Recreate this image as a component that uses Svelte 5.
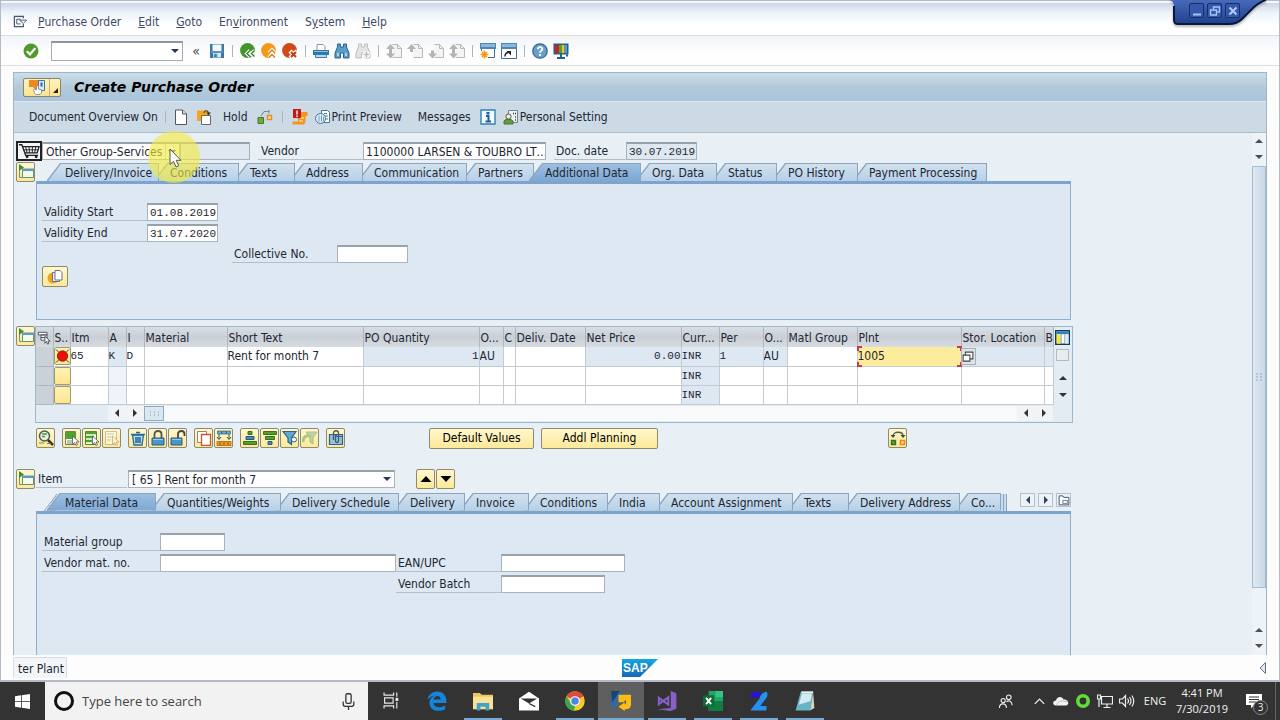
<script>
  let vendor = $state('1100000 LARSEN & TOUBRO LT…');
  let docDate = $state('30.07.2019');
  let command = $state('');
  let headerTab = $state('Additional Data');
  let itemTab = $state('Material Data');

  const menus = [
    ['P', 'urchase Order', ''],
    ['E', 'dit', ''],
    ['G', 'oto', ''],
    ['v', 'ironment', 'En'],
    ['y', 'stem', 'S'],
    ['H', 'elp', '']
  ];

  const headerTabs = [
    ['Delivery/Invoice', 112],
    ['Conditions', 85],
    ['Texts', 61],
    ['Address', 73],
    ['Communication', 109],
    ['Partners', 72],
    ['Additional Data', 112],
    ['Org. Data', 81],
    ['Status', 65],
    ['PO History', 86],
    ['Payment Processing', 134]
  ];

  const itemTabs = [
    ['Material Data', 109],
    ['Quantities/Weights', 130],
    ['Delivery Schedule', 123],
    ['Delivery', 71],
    ['Invoice', 69],
    ['Conditions', 84],
    ['India', 57],
    ['Account Assignment', 138],
    ['Texts', 61],
    ['Delivery Address', 116],
    ['Co...', 46]
  ];

  const systemTools = [
    [['save', 'Save']],
    [['back', 'Back'], ['exit', 'Exit'], ['cancel', 'Cancel']],
    [['print', 'Print'], ['find', 'Find'], ['findNext', 'Find next']],
    [['pageFirst', 'First page'], ['pageUp', 'Previous page'], ['pageDown', 'Next page'], ['pageLast', 'Last page']],
    [['newSession', 'New session'], ['shortcut', 'Create shortcut']],
    [['help', 'Help'], ['layout', 'Customize layout']]
  ];

  const itemTools = [
    [['detail', 'Details']],
    [['selectAll', 'Select all'], ['selectBlock', 'Select block'], ['deselect', 'Deselect all']],
    [['trash', 'Delete'], ['lock', 'Lock'], ['unlock', 'Unlock']],
    [['copy', 'Copy'], ['move', 'Fast change']],
    [['sortUp', 'Sort ascending'], ['sortDown', 'Sort descending'], ['filter', 'Filter'], ['filterOff', 'Reset filter']],
    [['attach', 'Additional planning']]
  ];

  // w: column width, mono: fixed-pitch value, ro: display-only once the row is filled
  const columns = [
    { key: 'itm', label: 'Itm', w: 38, mono: true },
    { key: 'acct', label: 'A', w: 18, mono: true, ro: true, tint: true },
    { key: 'cat', label: 'I', w: 18, mono: true },
    { key: 'material', label: 'Material', w: 83 },
    { key: 'text', label: 'Short Text', w: 136 },
    { key: 'qty', label: 'PO Quantity', w: 116, mono: true, ro: true, right: true },
    { key: 'unit', label: 'O...', w: 24, ro: true },
    { key: 'dc', label: 'C', w: 12 },
    { key: 'date', label: 'Deliv. Date', w: 70 },
    { key: 'price', label: 'Net Price', w: 96, mono: true, ro: true, right: true },
    { key: 'curr', label: 'Curr...', w: 38, mono: true, ro: true, always: true },
    { key: 'per', label: 'Per', w: 44, mono: true, ro: true },
    { key: 'opu', label: 'O...', w: 24, ro: true },
    { key: 'group', label: 'Matl Group', w: 70 },
    { key: 'plant', label: 'Plnt', w: 104 },
    { key: 'sloc', label: 'Stor. Location', w: 83, ro: true },
    { key: 'batch', label: 'B', w: 9, ro: true }
  ];

  let rows = $state([
    { itm: '65', acct: 'K', cat: 'D', text: 'Rent for month 7', qty: '1', unit: 'AU', price: '0.00', curr: 'INR', per: '1', opu: 'AU', plant: '1005' },
    { curr: 'INR' },
    { curr: 'INR' }
  ]);

  const taskApps = [
    { icon: 'taskView', label: 'Task View' },
    { icon: 'edge', label: 'Edge' },
    { icon: 'explorer', label: 'File Explorer', open: true },
    { icon: 'mail', label: 'Mail' },
    { icon: 'chrome', label: 'Chrome', open: true },
    { icon: 'sapgui', label: 'SAP Logon', open: true, active: true },
    { icon: 'vs', label: 'Visual Studio', open: true },
    { icon: 'excel', label: 'Excel', open: true },
    { icon: 'zoomit', label: 'Z', open: true },
    { icon: 'notepad', label: 'Notepad', open: true }
  ];

  const page = '<path d="M6.5 1.500h5l4 4v9h-9" fill="#f4f4f4" stroke="#b9b9b9"/><path d="M11.500 1.500v4h4" fill="none" stroke="#b9b9b9"/>';
  const up = '<path d="M4.500 1 9 6H6v3H3V6H0z" fill="#b4b4b4"/>';
  const down = '<path d="M4.500 15.500 9 10.500H6v-3H3v3H0z" fill="#b4b4b4"/>';
  const glasses = '<path d="M3.500 1h3v3h3V1h3v3l2.500 6v5h-5.500v-5h-3v5H1v-5l2.500-6z"';
  const hand = '<path d="M8.500 6v8.500l2-2 1.500 3 1.500-.8-1.500-2.700H15z" fill="#fff" stroke="#555" stroke-width=".8"/>';

  const icons = {
    menu: '<path d="M11 3.500V1.500H1.500v11H11v-3" fill="none" stroke="#46566f" stroke-width="1.300"/><path d="M4 4.500h4M4 9.500h4M4 4.500v5M7 5.500h7.500L11 9z" fill="#fff" stroke="#46566f"/>',
    ok: '<circle cx="8" cy="8" r="7.500" fill="#4f9a2c"/><path d="M3.800 8.200 7 11.300l5.300-6.200" fill="none" stroke="#fff" stroke-width="2.200"/>',
    save: '<path d="M1 1h14v14H1z" fill="#3a78a8"/><path d="M3.500 1.500h9V8h-9z" fill="#f3f8fc"/><path d="M4 10h8v4.500H4z" fill="#d9e9f4"/><path d="M5 11h3v3.500H5zM2 9h12" fill="#3a78a8" stroke="#79add0"/>',
    back: '<circle cx="7.500" cy="7.500" r="7.400" fill="#43942d"/><path d="M10 7.500 7 10.500l3 3M14.500 7.500l-3 3 3 3" fill="none" stroke="#fff" stroke-width="3.600"/><path d="M10 7.500 7 10.500l3 3M14.500 7.500l-3 3 3 3" fill="none" stroke="#347d26" stroke-width="1.400"/>',
    exit: '<circle cx="7.500" cy="7.500" r="7.400" fill="#f39a1b"/><path d="M8 10 11 7l3 3M8 14.500l3-3 3 3" fill="none" stroke="#fff" stroke-width="3.600"/><path d="M8 10 11 7l3 3M8 14.500l3-3 3 3" fill="none" stroke="#d8780c" stroke-width="1.400"/>',
    cancel: '<circle cx="7.500" cy="7.500" r="7.400" fill="#cf4a16"/><path d="m8 8 7 7m0-7-7 7" stroke="#fff" stroke-width="4.200"/><path d="m9 9 5 5m0-5-5 5" stroke="#c23a10" stroke-width="2"/>',
    print: '<path d="M4 7V1.500h6l2 2V7" fill="#fff" stroke="#8a98a6"/><path d="M0 7h16v5H0z" fill="#2f75a8"/><path d="M1 8h14v1H1z" fill="#8fc0df"/><path d="M2.500 11.500h11v3h-11z" fill="#b6dcf0" stroke="#3a7eae"/>',
    find: glasses + ' fill="#5b9cc8" stroke="#2b6490"/><path d="M3 10h2v3H3zM11 10h2v3h-2z" fill="#a9d0e8"/>',
    findNext: glasses + ' fill="#e4e4e4" stroke="#bdbdbd"/><path d="M11.500 8v7M8 11.500h7" stroke="#fff" stroke-width="4"/><path d="M11.500 8.500v6M8.500 11.500h6" stroke="#bbb" stroke-width="1.600"/>',
    pageFirst: page + up + down,
    pageUp: page + up,
    pageDown: page + down,
    pageLast: page + up + down,
    newSession: '<path d="M1.500 1.500h13v13h-13z" fill="#fff" stroke="#3b6d98"/><path d="M0 0h16v6H0z" fill="#4b86b4"/><path d="M1 1h14v3H1z" fill="#8ab8da"/><circle cx="4.500" cy="11.500" r="4.500" fill="#fff"/><path d="M4.500 7.500v8M.5 11.500h8M2 9l5 5m0-5-5 5" stroke="#f29b12" stroke-width="1.600"/>',
    shortcut: '<path d="M.5.500h15v15H.5z" fill="#fff" stroke="#3b6d98"/><path d="M0 0h16v6H0z" fill="#4b86b4"/><path d="M1 1h14v3H1z" fill="#8ab8da"/><path d="M4 13.500c0-3 1-4 3.500-4" fill="none" stroke="#222" stroke-width="1.500"/><path d="M5.500 8h4.500v4.500z" fill="#222"/>',
    help: '<circle cx="8" cy="8" r="7.200" fill="#6a9fca" stroke="#33678f" stroke-width="1.300"/><path d="M5.800 6.200C6 3.300 10.600 3.500 10.300 6.300 10.100 7.800 8 7.800 8 9.800M8 11v2" fill="none" stroke="#fff" stroke-width="1.800"/>',
    layout: '<path d="M.5.500h15v11H.5z" fill="#25608c"/><path d="M2 2h4.500v8H2z" fill="#cf1f1f"/><path d="M6 2h3v8H6z" fill="#4da332"/><path d="M9 2h2.500v8H9z" fill="#f2c21b"/><path d="M11.500 2H14v8h-2.500z" fill="#4c9bd0"/><path d="M8 11v3.500M4 15h8M13 12.500h2" stroke="#25608c" stroke-width="2"/>',
    services: '<path d="M0 1h10v7H8l-1 3-3-3H0z" fill="#ee8a1d"/><path d="M9.500 1.500h6v10h-6z" fill="#dceaf6" stroke="#3c75a8"/><path d="M11.500 3.500h2v4h-2z" fill="#2c62a0"/><path d="M6 14.500 4.500 11l1-1 2 1V6.500h2V10l3 .8V14l-1.500 1.500H7z" fill="#fff" stroke="#73818e" stroke-width=".8"/>',
    create: '<path d="M2.500 1h7l4 4v10.500h-11z" fill="#fff" stroke="#555"/><path d="M9.500 1v4h4" fill="#ddd" stroke="#555"/>',
    other: '<path d="M1 1.500h11V12H1z" fill="#f7a51c"/><path d="M5.500 6.500h9v9h-9z" fill="#fff" stroke="#667"/><path d="M8 4c0-3 4-3 4.500 0" fill="none" stroke="#444" stroke-width="1.200"/><path d="M10.500 3.500h4.500L12.500 6.500z" fill="#333"/>',
    check: '<path d="M1 8.500h5.500v6H1z" fill="#70a83c" stroke="#47762b"/><path d="M10.500 6.500h4v4h-4z" fill="#ffe8bc" stroke="#e98b1d" stroke-width="1.500"/><path d="M4 7 7 2.500h5M12 1v3.500" fill="none" stroke="#768390"/>',
    messages: '<path d="M6 3h9.500v4h-2v5c0 3-2 3.500-3 3.500H.5v-3h5.500z" fill="#f3941e"/><path d="M7 12h4M8 9h4" stroke="#ffd28a" stroke-width="1.500"/><path d="M1 0h8v9H1z" fill="#c31818"/><path d="M5 1.500v4M5 6.500V8" stroke="#fff" stroke-width="1.500"/>',
    preview: '<path d="M6.500 1.500h6l2 2v10h-8z" fill="#fff" stroke="#48759b"/><path d="M9 4.500h3M10 7h3M10 10h3" stroke="#48759b"/><circle cx="5.500" cy="9.500" r="5" fill="#dcecf6" stroke="#48759b"/><path d="M4 6.500v6M6.500 6.500v6M8.500 8v4" stroke="#6e9dbf"/>',
    info: '<path d="M1 1h14v14H1z" fill="#f6fbff" stroke="#2b84b9" stroke-width="1.400"/><path d="M6 7h2.500v5M5.500 12.500H11" fill="none" stroke="#17649b" stroke-width="2"/><path d="M6.500 3h3v2.500h-3z" fill="#17649b"/>',
    person: '<path d="M5.500 1.500h9v12h-9z" fill="#eef2f5" stroke="#76828d"/><path d="M10 4.500h1M12 4.500h1M12 8h1M12 11h1" stroke="#333" stroke-width="1.400"/><circle cx="5.500" cy="7.500" r="2.600" fill="#f0e9d6" stroke="#555"/><path d="M1 15v-3l2-1.500h5l2 1.500v3z" fill="#66993e" stroke="#4b7730"/>',
    expand: '<path d="M4.500 5.500h11v8h-11z" fill="#f5f9ea" stroke="#61907c"/><path d="M4 4.500h12v2.500H4z" fill="#5e9ac4"/><path d="M1.500 5v8.500h3" fill="none" stroke="#7e8d6a"/><path d="M1 0 6 3.500 1 7z" fill="#3d8e37"/>',
    texts: '<circle cx="6" cy="9" r="5.500" fill="#f0a41f"/><path d="M5.500 3.500h5l2 2v7h-7z" fill="#eef5fa" stroke="#68747f"/><path d="M8 1.500h5l2 2v7.500H8z" fill="#fff" stroke="#68747f"/>',
    config: '<path d="M1.500 1.500h10v3h-10zM4.500 4.500h7v3h-7zM4.500 7.500h7v3h-7z" fill="#fff" stroke="#404a55"/><path d="m9 6 6 5.500h-2.500l1 3-1.500.5-1-3L9 14z" fill="#fff" stroke="#404a55"/>',
    columns: '<path d="M.8.800h14.400v14.400H.8z" fill="#fff" stroke="#123b57" stroke-width="1.600"/><path d="M1.500 1.500h13v3h-13z" fill="#2887b9"/><path d="M2 5h4v9.500H2z" fill="#ffe42e"/><path d="M6.500 4.500v10M10.500 4.500v10" stroke="#6f9ab3"/><path d="M11 5h3.500v9.500H11z" fill="#d6ebf5"/>',
    detail: '<circle cx="6.500" cy="6" r="5" fill="#e5f0dc" stroke="#4b5c55" stroke-width="1.500"/><path d="M4 4h5M4 6.500h3" stroke="#529841" stroke-width="1.500"/><path d="m10 10 5 5" stroke="#333" stroke-width="2.500"/><path d="M9 13.500h4M1 13h5" stroke="#6d8a50"/>',
    selectAll: '<path d="M1.500 1.500h10v13h-10z" fill="#fff" stroke="#6f8362"/><path d="M2 2h9v7H2z" fill="#4fa22c"/><path d="M3 11h5M3 13h5" stroke="#7b8a74"/>' + hand,
    selectBlock: '<path d="M1.500 1.500h11v13h-11z" fill="#fff" stroke="#4f8a36"/><path d="M2 3h10M2 7h8M2 11h6" stroke="#4fa22c" stroke-width="2.500"/>' + hand,
    deselect: '<g opacity=".4"><path d="M1.500 1.500h11v13h-11z" fill="#fff" stroke="#777"/><path d="M3 4h7M3 7h5M3 10h4" stroke="#888"/>' + hand + '</g>',
    trash: '<path d="M2.500 5h11l-1.500 10H4z" fill="#b9dcef" stroke="#2b6a96" stroke-width="1.300"/><path d="M1 4.500h14M6 2.500h4M6 7v6M8 7v6M10 7v6" stroke="#2b6a96" stroke-width="1.600"/>',
    lock: '<path d="M4.500 8V4c0-4 7-4 7 0v4" fill="none" stroke="#555" stroke-width="1.800"/><path d="M2 8h12v7H2z" fill="#4f94c3" stroke="#245f8b"/><path d="M3 9.500h10" stroke="#9accea"/>',
    unlock: '<path d="M8 8V4c0-4 6.500-4 6.500 0v2" fill="none" stroke="#444" stroke-width="1.800"/><path d="M1 8h11v7H1z" fill="#4f94c3" stroke="#245f8b"/><path d="M2 9.500h9" stroke="#9accea"/>',
    copy: '<path d="M1.500 1.500h9v11h-9z" fill="#fff" stroke="#a47d78"/><path d="M5.500 4.500h9v11h-9z" fill="#fff" stroke="#c9542d" stroke-width="1.300"/>',
    move: '<path d="M1.500 1h4v3h-4zM6 1h4v3H6zM10.500 1h4v3h-4z" fill="#6dafd5" stroke="#28597b" stroke-width=".7"/><path d="M3 4v5M13 4v5M1 7l2 2.500L5 7M11 7l2 2.500L15 7" fill="none" stroke="#28597b"/><path d="M1 11.500h14v4H1z" fill="#f19a23" stroke="#9c5a13" stroke-width=".7"/><path d="M4 12v3M8 12v3M12 12v3" stroke="#9c5a13"/>',
    sortUp: '<path d="M6 1.500h4v3H6z" fill="#4fa22c" stroke="#39711f"/><path d="M4 6.500h8v3H4z" fill="#4a8cba" stroke="#28597b"/><path d="M1.500 11.500h13v3h-13z" fill="#4fa22c" stroke="#39711f"/>',
    sortDown: '<path d="M1.500 1.500h13v3h-13z" fill="#4fa22c" stroke="#39711f"/><path d="M3.500 6.500h9v3h-9z" fill="#4fa22c" stroke="#39711f"/><path d="M6 11.500h4v3H6z" fill="#4a8cba" stroke="#28597b"/>',
    filter: '<path d="M1 1.500h13L9.500 8v6.500L6 12V8z" fill="#64a8d2" stroke="#2b6490" stroke-width="1.200"/><circle cx="12" cy="9.500" r="2.500" fill="#fff" stroke="#2b6490"/>',
    filterOff: '<g opacity=".5"><path d="M4 2h11l-4 6v6l-3-2V8z" fill="#8bb78a" stroke="#5c8a68"/><path d="M1 12c0-5 3-7 8-6" fill="none" stroke="#5ca34a" stroke-width="3"/></g>',
    attach: '<path d="M1.500 4.500h13v10h-13z" fill="#8fc2e0" stroke="#2b6490" stroke-width="1.200"/><path d="M8.500 4.500v2h6" fill="none" stroke="#2b6490"/><path d="M5.500 10V3c0-3 5-3 5 0v8c0 2-3 2-3 0V5" fill="none" stroke="#4d5560" stroke-width="1.300"/>',
    swap: '<path d="M3 6c0-5 10-5 10 0" fill="none" stroke="#4e5c42" stroke-width="1.300"/><path d="M.5 5h5L3 8zM10.500 5h5L13 8z" fill="#444"/><path d="M1.500 10.500h4v4h-4z" fill="#5ba236" stroke="#38711f" stroke-width="1.400"/><path d="M10.500 10.500h4v4h-4z" fill="#ffe0a8" stroke="#ee8818" stroke-width="1.600"/>',
    stack: '<path d="M4.500 1.500h10v9h-10z" fill="#fff" stroke="#444" stroke-width="1.400"/><path d="M1.500 5.500h9v8h-9z" fill="#fff" stroke="#444" stroke-width="1.400"/>',
    tabList: '<path d="M1.500 2.500h5l1 2h7v10h-13z" fill="#fff" stroke="#40566e" stroke-width="1.300"/><path d="M6.500 8.500h6v4h-6z" fill="#fff" stroke="#40566e"/>',
    windows: '<path d="M0 2.300 6.500 1.400v6.200H0zM7.300 1.300 16 0v7.600H7.300zM0 8.400h6.500v6.200L0 13.700zM7.300 8.400H16V16l-8.700-1.300z" fill="#fff"/>',
    mic: '<rect x="5.500" y=".7" width="5" height="9" rx="1.500" fill="none" stroke="#333" stroke-width="1.200"/><path d="M3 8v2.500c0 1 1 2 2 2h6c1 0 2-1 2-2V8M8 12.500V16" fill="none" stroke="#333" stroke-width="1.200"/>',
    taskView: '<path d="M1 .5v2.500h9V.5M1 15.500V13h9v2.500M1.500 5.500h8v5h-8zM13 .5v4M13 9.500v6" fill="none" stroke="#e8e8e8" stroke-width="1.100"/><path d="M11.800 5.500h2.600v3h-2.600z" fill="#e8e8e8"/>',
    edge: '<path d="M.5 7.200C1.500-2 15.500-2 15.500 8v1.500H5.200c.5 4 5.500 4.300 9.300 2v3c-5.500 3-12.500 1-12.500-5C2 6.500 4 4.600 6 3.800 3.500 4 1.500 5.500.5 7.200zM5.300 6.800h5.600c0-4-5.200-3.600-5.600 0z" fill="#1585dc"/>',
    explorer: '<path d="M0 1.500h5.500L7 3h9v11.500H0z" fill="#eec45c"/><path d="M0 4.500h16v10H0z" fill="#fbe195"/><path d="M3 15.500v-6h10v6h-3v-3H6v3z" fill="#3fa3cc"/>',
    mail: '<path d="M0 6 8 .5 16 6v9.500H0z" fill="#fff"/><path d="M1.500 6h13L8 10z" fill="#333"/><path d="m8 10 5 2.500" stroke="#333"/>',
    chrome: '<circle cx="8" cy="8" r="7.800" fill="#f7c928"/><path d="M8 8 1.250 4.100A7.800 7.800 0 0 1 14.750 4.100z" fill="#dd4b3b"/><path d="M1.250 4.100 4.700 10 8 11.500l-.9 4.250A7.800 7.800 0 0 1 1.250 4.100z" fill="#3ba457"/><circle cx="8" cy="8" r="3.900" fill="#fff"/><circle cx="8" cy="8" r="3" fill="#4a86e8"/>',
    sapgui: '<path d="M0 0h9v9H4v4H0z" fill="#2f6aa5"/><path d="M0 0h7L1 9z" fill="#19466f"/><path d="M6 3h10v7.500c0 3-2 4-5 4v1.500L6 12.500 11 9v1.500c1 0 1-.5 1-1V7l-2 2H6z" fill="#f9bd15"/>',
    vs: '<path d="m11 0 4.500 1.800v12.400L11 16 .5 14.500 11 13.500z" fill="#8661c5"/><path d="M1.500 5.500 9 10.800V5L1.500 10.500z" fill="none" stroke="#8661c5" stroke-width="1.700"/>',
    excel: '<path d="M4.500 0H16v16H4.500z" fill="#21a366"/><path d="M10 0h6v5h-6z" fill="#33c481"/><path d="M4.500 8H16v8H4.500z" fill="#107c41"/><path d="M0 3.500h9v9H0z" fill="#0d6b38"/><path d="m2.500 5.500 4 5m0-5-4 5" stroke="#fff" stroke-width="1.500"/>',
    zoomit: '<path d="M2 1h8L8 5H1z" fill="#2514e0"/><path d="M14 .5c2 2 0 6-2 7.500l-3 4h5v3.500H1L8.500 6C9 3 11 1 14 .5z" fill="#2791ef"/>',
    notepad: '<path d="M4.500 1h10L12 15.500H.5z" fill="#69b4c6"/><path d="M5.500 2h8l-1 6L3 11z" fill="#cfecef"/><path d="m14.500 1 1 12.500-3.500 2z" fill="#d7d3c4"/><path d="M5 1h9.500" stroke="#eee" stroke-width="1.500"/>',
    people: '<circle cx="5.500" cy="7" r="2.200" fill="none" stroke="#eee" stroke-width="1.200"/><path d="M1.500 15c0-6 7.500-6 7.500 0" fill="none" stroke="#eee" stroke-width="1.200"/><circle cx="11.500" cy="3.500" r="2.500" fill="none" stroke="#eee" stroke-width="1.200"/><path d="M9 8.500c2.500-2.500 6-.5 6 3.500" fill="none" stroke="#eee" stroke-width="1.200"/>',
    chevron: '<path d="m3 10.500 5-5 5 5" fill="none" stroke="#eee" stroke-width="1.400"/>',
    cloud: '<path d="M3 12.500c-4 0-3.500-5 0-5C4 3 9.500 3 10.500 6.500c5-1 7 6 1.500 6z" fill="#f2f2f2"/><path d="M3 12.500C6 7 9 7.500 14 9" fill="none" stroke="#bbb"/>',
    green: '<circle cx="8" cy="8" r="5.200" fill="none" stroke="#62db3b" stroke-width="3.600"/>',
    network: '<path d="M4.500 3.500h11v7.500h-11zM10 11v3.500M6.500 14.500h7M.5 2h3v4h-3zM2 6v8" fill="none" stroke="#eee" stroke-width="1.200"/>',
    speaker: '<path d="M.5 6h3l3-3.500v11L3.500 10h-3z" fill="none" stroke="#eee" stroke-width="1.200"/><path d="M8.500 5.500q2 2.500 0 5M10.500 4q3 4 0 8M12.800 2.500q4 5.500 0 11" fill="none" stroke="#eee" stroke-width="1.200"/>',
    note: '<path d="M0 1h16v11H8l-3 3.500V12H0z" fill="#fff"/><path d="M3 4h10M3 6.500h10M3 9h7" stroke="#333" stroke-width="1.200"/>',
    cart: '<path d="M1 1.500h3l4 11h13M4.500 3.500H22l-2 6.500H7" fill="none" stroke="#222" stroke-width="1.400"/><path d="M8 3.500l1.500 6.500M11.500 3.500 12 10M15 3.500V10M18.500 3.500 17.500 10M5.500 6.800H21" stroke="#222"/><circle cx="9.500" cy="14" r="1.500" fill="#222"/><circle cx="19" cy="14" r="1.500" fill="#222"/>'
  };
</script>

{#snippet icon(name, size = 16)}
  <svg class="icon" width={size} height={size} viewBox="0 0 16 16" aria-hidden="true">{@html icons[name]}</svg>
{/snippet}

{#snippet arrow(dir)}
  <svg class="icon" width="8" height="8" viewBox="0 0 8 8" aria-hidden="true">
    <path
      d={dir === 'up' ? 'M4 2 8 6H0z' : dir === 'down' ? 'M0 2h8L4 6z' : dir === 'left' ? 'M6 0v8L2 4z' : 'M2 0v8l4-4z'}
      fill="currentColor"
    />
  </svg>
{/snippet}

{#snippet tabStrip(tabs, current, select, stacked = false)}
  <div class="tabs" class:stacked role="tablist">
    {#each tabs as [tab, width], i}
      <button
        class="tab"
        class:selected={tab === current}
        role="tab"
        aria-selected={tab === current}
        style:width="{width}px"
        style:z-index={tab === current ? 20 : tabs.length - i}
        onclick={() => select(tab)}
      ><span>{tab}</span></button>
    {/each}
  </div>
{/snippet}

<div class="screen">
  <div class="window">
    <header class="menubar">
      <button class="plain" aria-label="System menu">{@render icon('menu', 15)}</button>
      <nav>
        {#each menus as [key, rest, before]}
          <button class="plain menu">{before}<u>{key}</u>{rest}</button>
        {/each}
      </nav>
      <div class="win-controls">
        <svg class="win-shape" viewBox="0 0 98 26" aria-hidden="true">
          <defs>
            <linearGradient id="win" x2="0" y2="1">
              <stop offset="0" stop-color="#4669b8" />
              <stop offset="1" stop-color="#20408f" />
            </linearGradient>
          </defs>
          <path d="M0 0h98Q90 2 84 8L73 19Q68 24 60 24H9Q5 24 5 20V6Q5 1 0 0z" fill="url(#win)" />
          <path d="M5 6v14q0 4 4 4h51q8 0 13-5L84 8q6-6 13-8" fill="none" stroke="#0c1839" stroke-width="2" />
        </svg>
        <div class="win-buttons">
          <button aria-label="Minimize"><svg viewBox="0 0 12 12"><path d="M2 9.500h8" stroke="#a9c3ff" stroke-width="2" /></svg></button>
          <button aria-label="Restore"><svg viewBox="0 0 12 12"><path d="M4.500 4V2h6v5h-2M1.500 5h6v5h-6z" fill="none" stroke="#a9c3ff" stroke-width="1.400" /></svg></button>
          <button aria-label="Close"><svg viewBox="0 0 12 12"><path d="m2.500 2.500 7 7m0-7-7 7" stroke="#b5ccff" stroke-width="2" /></svg></button>
        </div>
      </div>
    </header>

    <div class="systembar">
      <button class="plain" aria-label="Enter">{@render icon('ok')}</button>
      <div class="command">
        <input aria-label="Command" bind:value={command} />
        <span class="caret">{@render arrow('down')}</span>
      </div>
      <button class="plain collapse" aria-label="Collapse command field">«</button>
      {#each systemTools as group, i}
        {#if i}<span class="sep"></span>{/if}
        {#each group as [name, label]}
          <button class="plain" aria-label={label}>{@render icon(name)}</button>
        {/each}
      {/each}
    </div>

    <div class="frame">
      <div class="titlebar">
        <div class="services">
          <button aria-label="Services for object">{@render icon('services')}</button>
          <button class="more" aria-label="More services"><svg width="5" height="5" viewBox="0 0 5 5"><path d="M5 0v5H0z" fill="#222" /></svg></button>
        </div>
        <h1>Create Purchase Order</h1>
      </div>

      <div class="appbar">
        <button class="plain">Document Overview On</button>
        <span class="sep wide"></span>
        <button class="plain" aria-label="Create">{@render icon('create')}</button>
        <button class="plain" aria-label="Other purchase order">{@render icon('other')}</button>
        <button class="plain hold">Hold</button>
        <button class="plain" aria-label="Check">{@render icon('check')}</button>
        <span class="sep"></span>
        <button class="plain" aria-label="Output messages">{@render icon('messages')}</button>
        <button class="plain">{@render icon('preview')}Print Preview</button>
        <button class="plain messages">Messages</button>
        <button class="plain" aria-label="Information">{@render icon('info')}</button>
        <button class="plain">{@render icon('person')}Personal Setting</button>
      </div>

      <div class="work">
        <main>
          <div class="doc-header">
            <svg class="cart" width="26" height="20" viewBox="0 0 23 16" aria-label="Purchase order">{@html icons.cart}</svg>
            <div class="select doc-type">
              <select aria-label="Order type"><option>Other Group-Services</option></select>
              <span class="caret boxed">{@render arrow('down')}</span>
              <svg class="pointer" viewBox="0 0 60 60" aria-hidden="true">
                <circle cx="30" cy="30" r="26" fill="#f2ea3c" opacity=".62" />
                <path d="M26 22v15.500l3.500-3.200 2.600 5.700 2.600-1.200-2.500-5.500h4.700z" fill="#fff" stroke="#555" />
              </svg>
            </div>
            <input class="field off po-number" aria-label="Purchase order number" readonly />
            <label class="lbl vendor-lbl" for="vendor">Vendor</label>
            <input class="field vendor" id="vendor" bind:value={vendor} />
            <label class="lbl date-lbl" for="doc-date">Doc. date</label>
            <input class="field mono off date" id="doc-date" bind:value={docDate} />
          </div>

          <section class="block header-block">
            <button class="yellow expand" aria-label="Collapse header">{@render icon('expand')}</button>
            <div class="block-body">
              {@render tabStrip(headerTabs, headerTab, (t) => (headerTab = t))}
              <div class="panel header-panel">
                <div class="form-row">
                  <label class="lbl w105" for="valid-from">Validity Start</label>
                  <input class="field mono date" id="valid-from" value="01.08.2019" />
                </div>
                <div class="form-row">
                  <label class="lbl w105" for="valid-to">Validity End</label>
                  <input class="field mono date" id="valid-to" value="31.07.2020" />
                </div>
                <div class="form-row second">
                  <label class="lbl w105" for="collective">Collective No.</label>
                  <input class="field date" id="collective" />
                </div>
                <button class="yellow texts-btn" aria-label="Texts">{@render icon('texts')}</button>
              </div>
            </div>
          </section>

          <section class="block items-block">
            <button class="yellow expand" aria-label="Collapse item overview">{@render icon('expand')}</button>
            <div class="block-body">
              <div class="grid-box">
                <div class="grid-main">
                  <table>
                    <colgroup>
                      <col style:width="17px" />
                      <col style:width="17px" />
                      {#each columns as col}<col style:width="{col.w}px" />{/each}
                    </colgroup>
                    <thead>
                      <tr>
                        <th aria-label="Configure">{@render icon('config', 14)}</th>
                        <th>S..</th>
                        {#each columns as col}<th>{col.label}</th>{/each}
                      </tr>
                    </thead>
                    <tbody>
                      {#each rows as row, r}
                        <tr>
                          <td class="selector"><button aria-label="Select row {r + 1}"></button></td>
                          <td class="status">
                            <button aria-label="Status">
                              {#if row.itm}
                                <svg width="16" height="16" viewBox="0 0 16 16"><path d="M1 1l3 3M15 1l-3 3M1 15l3-3M15 15l-3-3" stroke="#333" /><circle cx="8" cy="8" r="5.500" fill="#f30b0b" stroke="#6d2b12" /></svg>
                              {/if}
                            </button>
                          </td>
                          {#each columns as col}
                            {@const locked = col.ro && (row.itm || col.always)}
                            <td
                              class:locked
                              class:tint={col.tint && !locked}
                              class:focused={col.key === 'plant' && r === 0}
                            >
                              <input
                                class:mono={col.mono}
                                class:right={col.right}
                                aria-label="{col.label} {r + 1}"
                                readonly={locked}
                                bind:value={row[col.key]}
                              />
                              {#if col.key === 'plant' && r === 0}
                                <i class="corners"></i>
                                <button class="f4" aria-label="Possible entries">{@render icon('stack', 12)}</button>
                              {/if}
                            </td>
                          {/each}
                        </tr>
                      {/each}
                    </tbody>
                  </table>
                  <div class="hscroll">
                    <button aria-label="Scroll left">{@render arrow('left')}</button>
                    <button aria-label="Scroll right">{@render arrow('right')}</button>
                    <span class="hthumb"><svg width="9" height="5" viewBox="0 0 9 5"><path d="M0 1h1M4 1h1M8 1h1M0 4h1M4 4h1M8 4h1" stroke="#7f95a9" /></svg></span>
                    <span class="htrack"></span>
                    <button aria-label="Page left">{@render arrow('left')}</button>
                    <button aria-label="Page right">{@render arrow('right')}</button>
                  </div>
                </div>
                <div class="grid-side">
                  <button aria-label="Table settings">{@render icon('columns', 15)}</button>
                  <span class="vthumb"></span>
                  <button class="step" aria-label="Row up">{@render arrow('up')}</button>
                  <button class="step" aria-label="Row down">{@render arrow('down')}</button>
                </div>
              </div>

              <div class="item-tools">
                {#each itemTools as group}
                  <div class="group">
                    {#each group as [name, label]}
                      <button class="yellow sq" aria-label={label}>{@render icon(name)}</button>
                    {/each}
                  </div>
                {/each}
                <button class="yellow text default-values">Default Values</button>
                <button class="yellow text planning">Addl Planning</button>
                <button class="yellow sq swap" aria-label="Switch">{@render icon('swap')}</button>
              </div>
            </div>
          </section>

          <div class="item-head">
            <button class="yellow expand" aria-label="Collapse item detail">{@render icon('expand')}</button>
            <label class="lbl item-lbl" for="item">Item</label>
            <div class="select item-select">
              <select id="item"><option>[ 65 ] Rent for month 7</option></select>
              <span class="caret">{@render arrow('down')}</span>
            </div>
            <button class="yellow sq prev" aria-label="Previous item"><svg width="12" height="8" viewBox="0 0 12 8"><path d="M6 1l5.500 6H.5z" /></svg></button>
            <button class="yellow sq" aria-label="Next item"><svg width="12" height="8" viewBox="0 0 12 8"><path d="M6 7 .5 1h11z" /></svg></button>
          </div>

          <section class="block detail-block">
            <div class="block-body">
              <div class="tab-line">
                {@render tabStrip(itemTabs, itemTab, (t) => (itemTab = t), true)}
                <div class="tab-nav">
                  <button aria-label="Tabs left">{@render arrow('left')}</button>
                  <button aria-label="Tabs right">{@render arrow('right')}</button>
                  <button aria-label="Tab list">{@render icon('tabList', 12)}</button>
                </div>
              </div>
              <div class="panel detail-panel">
                <div class="form-row">
                  <label class="lbl w118" for="mat-group">Material group</label>
                  <input class="field mat-group" id="mat-group" />
                </div>
                <div class="form-row">
                  <label class="lbl w118" for="vendor-mat">Vendor mat. no.</label>
                  <input class="field vendor-mat" id="vendor-mat" />
                  <label class="lbl w105" for="ean">EAN/UPC</label>
                  <input class="field ean" id="ean" />
                </div>
                <div class="form-row batch-row">
                  <label class="lbl w105" for="batch">Vendor Batch</label>
                  <input class="field batch" id="batch" />
                </div>
              </div>
            </div>
          </section>
        </main>

        <div class="vscroll">
          <button aria-label="Scroll up">{@render arrow('up')}</button>
          <button aria-label="Scroll down">{@render arrow('down')}</button>
          <span class="thumb"><svg width="7" height="8" viewBox="0 0 7 8"><path d="M0 1h2M4 1h2M0 4h2M4 4h2M0 7h2M4 7h2" stroke="#91a9c0" /></svg></span>
          <button aria-label="Page up">{@render arrow('up')}</button>
          <button aria-label="Page down">{@render arrow('down')}</button>
        </div>
      </div>
    </div>

    <footer class="statusbar">
      <span class="status-text">ter Plant</span>
      <svg width="36" height="18" viewBox="0 0 36 18" role="img" aria-label="SAP">
        <defs>
          <linearGradient id="sap" x2="0" y2="1">
            <stop offset="0" stop-color="#12a8e0" />
            <stop offset="1" stop-color="#1866b4" />
          </linearGradient>
        </defs>
        <path d="M0 0h36L18 18H0z" fill="url(#sap)" />
        <text x="1" y="13" fill="#fff" font-family="Liberation Sans, sans-serif" font-weight="700" font-size="12">SAP</text>
      </svg>
      <button class="plain status-more" aria-label="Show status details"><svg width="8" height="12" viewBox="0 0 8 12"><path d="M6.500.500v11L1 6z" fill="#dfe6ef" stroke="#66788c" /></svg></button>
    </footer>
  </div>

  <div class="taskbar">
    <button class="start" aria-label="Start">{@render icon('windows', 15)}</button>
    <label class="search">
      <span class="ring"></span>
      <input placeholder="Type here to search" aria-label="Type here to search" />
      {@render icon('mic', 17)}
    </label>
    <div class="apps">
      {#each taskApps as app}
        <button class:open={app.open} class:active={app.active} aria-label={app.label}>
          {@render icon(app.icon, app.icon === 'taskView' ? 17 : 20)}
        </button>
      {/each}
    </div>
    <div class="tray">
      <button class="people" aria-label="People">{@render icon('people', 15)}</button>
      <button aria-label="Show hidden icons">{@render icon('chevron', 15)}</button>
      <button aria-label="OneDrive">{@render icon('cloud')}</button>
      <button aria-label="Antivirus">{@render icon('green')}</button>
      <button aria-label="Network">{@render icon('network')}</button>
      <button aria-label="Volume">{@render icon('speaker')}</button>
      <button class="lang">ENG</button>
      <div class="clock"><span>4:41 PM</span><span>7/30/2019</span></div>
      <button class="notes" aria-label="Notifications">{@render icon('note')}<span class="badge">3</span></button>
    </div>
  </div>
</div>

<style>
  :global(body) {
    background: #fff;
  }

  .screen, .screen * {
    box-sizing: border-box;
  }

  .screen {
    min-height: 100vh;
    display: flex;
    flex-direction: column;
    font: 12px/16px 'DejaVu Sans Condensed', 'Noto Sans', sans-serif;
    color: #1d2733;
  }

  button, input, select {
    font: inherit;
    color: inherit;
    margin: 0;
    padding: 0;
    border: 0;
    border-radius: 0;
    background: none;
    outline: none;
  }

  button {
    display: flex;
    align-items: center;
    justify-content: center;
    white-space: nowrap;
  }

  select {
    appearance: none;
    width: 100%;
    height: 100%;
  }

  .icon {
    display: block;
    flex: none;
  }

  .mono {
    font-family: 'Liberation Mono', monospace;
    font-size: 11px;
  }

  .window {
    flex: 1;
    display: flex;
    flex-direction: column;
    border: 1px solid #b4bac6;
    border-width: 1px 1px 2px 1px;
    background: #fcfcfd;
  }

  /* menu bar */
  .menubar {
    position: relative;
    display: flex;
    align-items: center;
    height: 35px;
    padding: 6px 12px 0;
    border-top: 2px solid #f4f7fb;
    border-bottom: 1px solid #dcdee3;
    background: linear-gradient(#cdd6e5, #eef3fa 30%, #fff 70%);
    color: #3d4a66;
  }

  nav {
    display: flex;
    gap: 17px;
    margin-left: 10px;
  }

  .win-controls {
    position: absolute;
    top: -3px;
    right: 12px;
    width: 98px;
    height: 26px;
  }

  .win-shape {
    display: block;
    width: 98px;
    filter: drop-shadow(0 2px 1px #0004);
  }

  .win-buttons {
    position: absolute;
    top: 3px;
    left: 20px;
    display: flex;
    gap: 3px;
  }

  .win-buttons button {
    width: 15px;
    height: 15px;
    border: 1px solid #15306f;
    border-radius: 2px;
    background: #3558a8;
  }

  .win-buttons svg {
    width: 12px;
  }

  /* system toolbar */
  .systembar {
    display: flex;
    align-items: center;
    gap: 5px;
    height: 30px;
    padding: 0 22px;
    border-bottom: 1px solid #dcdee3;
    background: linear-gradient(#f1f4f9, #fefefe 60%);
  }

  .command {
    position: relative;
    width: 132px;
    height: 20px;
    margin-left: 7px;
    border: 1px solid #a5abb3;
    border-top: 2px solid #8e959f;
    background: #fff;
  }

  .command input {
    width: 100%;
    height: 100%;
    padding: 0 20px 0 4px;
  }

  .caret {
    position: absolute;
    top: 0;
    right: 3px;
    bottom: 0;
    display: flex;
    align-items: center;
    color: #26365a;
    pointer-events: none;
  }

  .collapse {
    width: 16px;
    color: #444;
    font-size: 14px;
  }

  .sep {
    width: 1px;
    height: 12px;
    margin: 0 2px;
    background: #a9b7c4;
  }

  /* framed transaction area */
  .frame {
    flex: 1;
    display: flex;
    flex-direction: column;
    margin: 6px 12px 0;
    border: 1px solid #a3b5c5;
    border-bottom: 0;
    background: #e8eff5;
  }

  .titlebar {
    display: flex;
    align-items: center;
    gap: 13px;
    height: 29px;
    padding: 0 9px;
    border-bottom: 1px solid #d9e8f3;
    background: linear-gradient(#cbdeec, #b3cad9 50%, #a8c4dc);
  }

  .services {
    display: flex;
    height: 19px;
    border: 1px solid #8b8468;
    border-radius: 2px;
    background: linear-gradient(#fff3bd, #fbe391);
  }

  .services button:first-child {
    width: 26px;
    border-right: 1px solid #c9b672;
  }

  .services .more {
    width: 10px;
    padding-top: 7px;
  }

  h1 {
    margin: 0;
    font-family: 'DejaVu Sans', sans-serif;
    font-size: 14px;
    line-height: 20px;
    font-weight: 700;
    font-style: italic;
    color: #000;
  }

  .appbar {
    display: flex;
    align-items: center;
    gap: 7px;
    height: 31px;
    padding: 0 15px;
    border-bottom: 1px solid #a9bccb;
    background: #ccdae5;
  }

  .appbar .plain {
    gap: 1px;
  }

  .appbar .wide {
    margin: 0;
  }

  .appbar .hold {
    margin: 0 2px 0 4px;
  }

  .appbar .messages {
    margin: 0 2px 0 9px;
  }

  .work {
    flex: 1;
    display: flex;
  }

  main {
    flex: 1;
    min-width: 0;
    display: flex;
    flex-direction: column;
    padding: 8px 0 0 2px;
  }

  .doc-header {
    display: flex;
    align-items: center;
    height: 20px;
  }

  .cart {
    border: 2px solid #222;
    background: #f3f6f8;
  }

  .select {
    position: relative;
    height: 18px;
    border: 1px solid #a9b3bc;
    border-top: 2px solid #98a2ab;
    background: #fff;
  }

  .doc-type {
    width: 138px;
  }

  .doc-type select {
    padding-left: 3px;
  }

  .caret.boxed {
    right: 1px;
    padding: 0 2px;
    border-left: 1px solid #c5ccd2;
  }

  .pointer {
    position: absolute;
    top: -17px;
    right: -25px;
    z-index: 30;
    width: 60px;
    height: 60px;
    pointer-events: none;
  }

  .field {
    height: 18px;
    padding: 0 0 0 2px;
    border: 1px solid #a9b3bc;
    border-top: 2px solid #98a2ab;
    background: #fff;
  }

  .field.off {
    background: #dfe8f1;
  }

  .lbl {
    height: 18px;
    padding: 1px 2px 0;
    border-bottom: 1px solid #b3bfca;
    white-space: nowrap;
  }

  .po-number {
    width: 70px;
  }

  .vendor-lbl {
    width: 105px;
    margin-left: 8px;
    padding-left: 3px;
  }

  .vendor {
    width: 183px;
  }

  .date-lbl {
    width: 72px;
    margin-left: 8px;
  }

  .date {
    width: 71px;
  }

  .w105 {
    width: 105px;
  }

  .w118 {
    width: 118px;
  }

  /* blocks */
  .block {
    display: flex;
    align-items: flex-start;
  }

  .block-body {
    flex: 1;
    min-width: 0;
    max-width: 1038px;
  }

  .yellow {
    border: 1px solid #8f8a6e;
    border-radius: 2px;
    background: linear-gradient(#fff7cf, #fde998);
    color: #000;
  }

  .expand {
    flex: none;
    width: 19px;
    height: 20px;
  }

  .tabs {
    position: relative;
    z-index: 0;
    display: flex;
    min-width: 0;
    padding-left: 12px;
  }

  .tab {
    position: relative;
    flex: none;
    justify-content: flex-start;
    height: 18px;
    margin-left: -5px;
    padding: 2px 0 0 16px;
    background: #8ba5bf;
    clip-path: polygon(13px 0, 100% 0, 100% 100%, 0 100%, 0 17px);
  }

  .tab::before {
    content: '';
    position: absolute;
    inset: 1px 1px 0 1px;
    background: linear-gradient(#d2e1ee, #b5d0e8);
    clip-path: polygon(13px 0, 100% 0, 100% 100%, 0 100%, 0 17px);
  }

  .tab span {
    position: relative;
  }

  .tab:first-child {
    margin-left: 0;
    padding-left: 18px;
  }

  .tab.selected::before {
    background: linear-gradient(#9dbfe0, #7ea7d3);
  }

  /* edges of the tabs scrolled out of view */
  .stacked::before {
    content: '';
    position: absolute;
    left: 15px;
    top: 1px;
    width: 12px;
    height: 17px;
    background: repeating-linear-gradient(90deg, #8ba5bf 0 1px, #c9dced 1px 3px);
    transform: skewX(-37deg);
  }

  .stacked::after {
    content: '';
    width: 6px;
    margin-top: 1px;
    background: repeating-linear-gradient(90deg, #c9dced 0 2px, #8ba5bf 2px 3px);
  }

  .panel {
    max-width: 1035px;
    border: 1px solid #8fb0cd;
    border-top: 3px solid #7da4cc;
    background: #dee8f2;
  }

  .header-block {
    padding-top: 1px;
  }

  .header-block .tabs {
    padding-top: 1px;
  }

  .header-block .panel, .detail-block .panel {
    margin-left: 1px;
  }

  .header-panel {
    display: flex;
    flex-direction: column;
    gap: 3px;
    padding: 19px 5px 32px;
  }

  .form-row {
    display: flex;
  }

  .second {
    margin-left: 190px;
  }

  .texts-btn {
    width: 26px;
    height: 21px;
  }

  /* item overview */
  .items-block {
    padding-top: 6px;
  }

  .grid-box {
    display: flex;
    border: 1px solid #9fb7cc;
    background: #e3ebf3;
  }

  .grid-main {
    flex: 1;
    min-width: 0;
  }

  table {
    width: 100%;
    max-width: 1017px;
    table-layout: fixed;
    border-collapse: collapse;
    background: #fff;
  }

  th {
    height: 20px;
    padding: 2px 0 0 1px;
    border-right: 1px solid #b0b6be;
    background: linear-gradient(#d9dee3, #c9cfd6 50%, #d6dbe0);
    font-weight: 400;
    text-align: left;
    white-space: nowrap;
    overflow: hidden;
  }

  td {
    position: relative;
    height: 19px;
    padding: 0;
    border-right: 1px solid #c5cbd3;
    border-bottom: 1px solid #c5cbd3;
  }

  td input {
    display: block;
    width: 100%;
    height: 18px;
  }

  td .right {
    text-align: right;
  }

  .locked {
    background: #dde8f3;
  }

  .tint {
    background: #eff4fa;
  }

  .focused {
    background: #fdec9c;
  }

  .corners {
    position: absolute;
    inset: -1px;
    pointer-events: none;
    --c: #c8394a;
    background:
      linear-gradient(var(--c) 0 0) 0 0 / 5px 2px,
      linear-gradient(var(--c) 0 0) 0 0 / 2px 5px,
      linear-gradient(var(--c) 0 0) 100% 0 / 5px 2px,
      linear-gradient(var(--c) 0 0) 100% 0 / 2px 5px,
      linear-gradient(var(--c) 0 0) 0 100% / 5px 2px,
      linear-gradient(var(--c) 0 0) 0 100% / 2px 5px,
      linear-gradient(var(--c) 0 0) 100% 100% / 5px 2px,
      linear-gradient(var(--c) 0 0) 100% 100% / 2px 5px;
    background-repeat: no-repeat;
  }

  .f4 {
    position: absolute;
    top: 1px;
    left: 100%;
    z-index: 2;
    width: 15px;
    height: 17px;
    border: 1px solid #a5afba;
    background: #dde4ea;
  }

  .selector {
    background: #cbd1d9;
    border-color: #aeb6bf;
  }

  .selector button {
    width: 100%;
    height: 18px;
  }

  .status button {
    width: 17px;
    height: 18px;
    border: 1px solid #a39a6c;
    border-radius: 2px;
    background: linear-gradient(#fff2b4, #fde68f);
  }

  .hscroll {
    display: flex;
    align-items: center;
    height: 17px;
    padding-left: 72px;
    color: #333;
  }

  .hscroll button {
    width: 18px;
    height: 15px;
    background: #f0f4f7;
  }

  .hthumb {
    display: flex;
    align-items: center;
    justify-content: center;
    width: 20px;
    height: 15px;
    border: 1px solid #93abc0;
    background: #dbe7f0;
  }

  .htrack {
    flex: 1;
    height: 15px;
    background: #f8f9fa;
  }

  .grid-side {
    display: flex;
    flex-direction: column;
    align-items: center;
    width: 19px;
    padding-top: 3px;
    color: #333;
  }

  .vthumb {
    width: 13px;
    height: 12px;
    margin: 4px 0 8px;
    border: 1px solid #b3bbc2;
    background: #e8ecef;
  }

  .step {
    width: 15px;
    height: 17px;
  }

  .item-tools {
    display: flex;
    align-items: center;
    gap: 7px;
    padding: 5px 0 0 1px;
  }

  .group {
    display: flex;
    gap: 1px;
  }

  .sq {
    width: 19px;
    height: 20px;
  }

  .text {
    height: 21px;
  }

  .default-values {
    width: 105px;
    margin-left: 77px;
  }

  .planning {
    width: 117px;
  }

  .swap {
    margin-left: 223px;
  }

  /* item detail */
  .item-head {
    display: flex;
    align-items: center;
    gap: 1px;
    height: 20px;
    margin-top: 20px;
  }

  .item-lbl {
    width: 91px;
  }

  .item-select {
    width: 267px;
  }

  .item-select select {
    padding-left: 3px;
  }

  .prev {
    margin-left: 20px;
  }

  .detail-block {
    flex: 1;
    align-items: stretch;
    margin-left: 19px;
    padding-top: 4px;
  }

  .detail-block .block-body {
    display: flex;
    flex-direction: column;
  }

  .tab-line {
    display: flex;
    justify-content: space-between;
  }

  .tab-nav {
    display: flex;
    gap: 3px;
    margin-right: 2px;
    color: #33445c;
  }

  .tab-nav button {
    width: 15px;
    height: 14px;
    border: 1px solid #b3c1cf;
    background: #edf2f7;
  }

  .detail-panel {
    flex: 1;
    display: flex;
    flex-direction: column;
    gap: 3px;
    min-height: 120px;
    padding: 19px 5px 0;
    border-bottom: 0;
  }

  .mat-group {
    width: 65px;
  }

  .vendor-mat {
    width: 236px;
  }

  .ean {
    width: 124px;
  }

  .batch {
    width: 104px;
  }

  .batch-row {
    margin-left: 354px;
  }

  /* outer scroll bar */
  .vscroll {
    display: flex;
    flex-direction: column;
    width: 14px;
    padding-bottom: 1px;
    background: #eef3f7;
    color: #4b5157;
  }

  .vscroll button {
    height: 16px;
  }

  .thumb {
    flex: 1;
    display: flex;
    align-items: center;
    justify-content: center;
    margin: 1px 0 34px;
    border: 1px solid #a5bccf;
    background: linear-gradient(90deg, #dfe8f0, #c9d9e8);
  }

  .statusbar {
    display: grid;
    grid-template-columns: 1fr auto 1fr;
    align-items: center;
    height: 25px;
    padding: 0 12px;
    background: #fdfdfe;
  }

  .status-text {
    width: 54px;
    height: 21px;
    padding: 3px 4px 0;
    border: 1px solid #d5dce4;
    border-bottom: 0;
    border-radius: 2px;
    background: #f3f6f9;
    white-space: nowrap;
  }

  .status-more {
    justify-self: end;
  }

  /* Windows taskbar */
  .taskbar {
    display: flex;
    height: 38px;
    background: #333;
    color: #f2f2f2;
    font-family: 'Open Sans', 'Noto Sans', sans-serif;
  }

  .start {
    width: 45px;
  }

  .search {
    display: flex;
    align-items: center;
    width: 323px;
    padding: 0 11px 0 9px;
    background: #f2f2f2;
  }

  .search input {
    flex: 1;
    min-width: 0;
    margin-left: 8px;
    font-size: 13px;
  }

  .search input::placeholder {
    color: #444;
    opacity: 1;
  }

  .search .icon {
    color: #333;
  }

  .ring {
    width: 20px;
    height: 20px;
    border: 3px solid #111;
    border-radius: 50%;
  }

  .apps {
    display: flex;
  }

  .apps button {
    width: 46px;
    border-bottom: 2px solid transparent;
    padding-top: 1px;
  }

  .apps .open {
    background: linear-gradient(#76a9d4 0 0) 50% 100% / 38px 2px no-repeat border-box;
  }

  .apps .active {
    background: linear-gradient(#76a9d4 0 0) 50% 100% / 46px 2px no-repeat border-box, #5f5f5f;
  }

  .tray {
    display: flex;
    align-items: center;
    margin-left: auto;
    padding-right: 4px;
  }

  .tray button {
    width: 22px;
    height: 100%;
  }

  .tray .people {
    margin-right: 12px;
  }

  .tray .lang {
    width: 34px;
    font-size: 11px;
  }

  .clock {
    display: flex;
    flex-direction: column;
    width: 60px;
    font-size: 11px;
    text-align: center;
  }

  .tray .notes {
    position: relative;
    width: 44px;
    border-right: 1px solid #666;
  }

  .badge {
    position: absolute;
    left: 21px;
    top: 18px;
    width: 15px;
    height: 15px;
    border: 1px solid #888;
    border-radius: 50%;
    background: #333;
    font-size: 10px;
    line-height: 13px;
    text-align: center;
  }
</style>
